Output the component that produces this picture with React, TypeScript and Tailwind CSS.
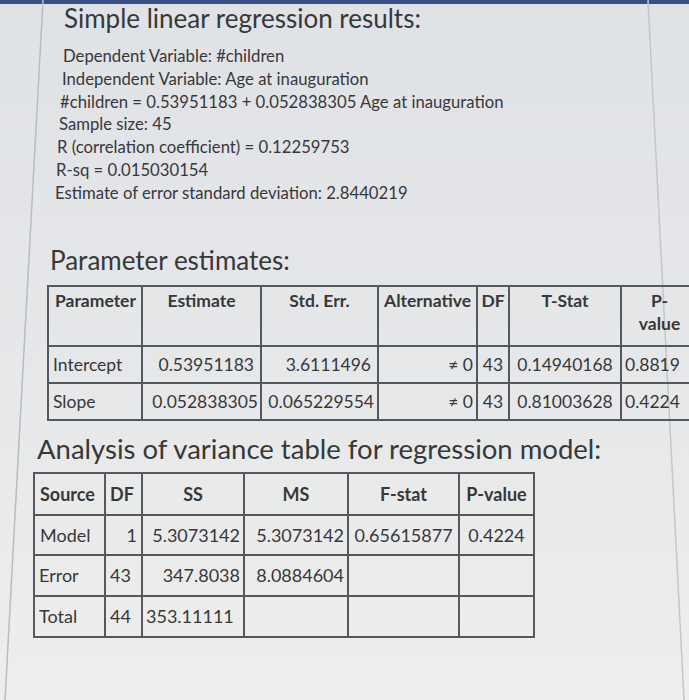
import React from 'react';

const summaryLines: { text: string; pad: string }[] = [
  { text: 'Dependent Variable: #children', pad: 'pl-[63px]' },
  { text: 'Independent Variable: Age at inauguration', pad: 'pl-[62px]' },
  { text: '#children = 0.53951183 + 0.052838305 Age at inauguration', pad: 'pl-[60px]' },
  { text: 'Sample size: 45', pad: 'pl-[59px]' },
  { text: 'R (correlation coefficient) = 0.12259753', pad: 'pl-[57px]' },
  { text: 'R-sq = 0.015030154', pad: 'pl-[56px]' },
  { text: 'Estimate of error standard deviation: 2.8440219', pad: 'pl-[55px]' },
];

const cell = 'border-2 border-[#55585c] px-[6px]';

export default function App() {
  return (
    <div className="relative w-[689px] h-[700px] overflow-hidden bg-gradient-to-b from-[#dfe2e6] via-[#e6e7e9] to-[#eeeeec] text-[#37383a] font-['Lato','Liberation_Sans',sans-serif]">
      {/* photo frame lines */}
      <svg className="absolute inset-0 pointer-events-none" width="689" height="700">
        <line x1="43" y1="0" x2="5" y2="700" stroke="#b9bcc0" strokeWidth="1.5" />
        <line x1="648" y1="0" x2="684" y2="700" stroke="#c4c6c9" strokeWidth="1.5" />
      </svg>
      <div className="h-[4px] bg-[#3b4f80]" />

      <h1 className="relative pl-[64px] mt-0 text-[26px] leading-[28px] font-normal">
        Simple linear regression results:
      </h1>

      <div className="relative mt-[13px] text-[16.7px] leading-[22.8px]">
        {summaryLines.map((l) => (
          <div key={l.text} className={l.pad}>
            {l.text}
          </div>
        ))}
      </div>

      <h2 className="relative pl-[50px] mt-[41px] text-[26px] leading-[28px] font-normal">
        Parameter estimates:
      </h2>

      <table className="relative ml-[47px] mt-[11px] w-[650px] table-fixed border-collapse text-[17.5px] leading-[23px]">
        <colgroup>
          <col className="w-[94px]" />
          <col className="w-[119px]" />
          <col className="w-[117px]" />
          <col className="w-[99px]" />
          <col className="w-[32px]" />
          <col className="w-[112px]" />
          <col className="w-[77px]" />
        </colgroup>
        <thead>
          <tr className="h-[60px] align-top font-semibold">
            <th className={`${cell} pt-[2px] text-left !px-[6px]`}>Parameter</th>
            <th className={`${cell} pt-[2px] text-center`}>Estimate</th>
            <th className={`${cell} pt-[2px] text-center`}>Std. Err.</th>
            <th className={`${cell} pt-[2px] text-center !px-[2px]`}>Alternative</th>
            <th className={`${cell} pt-[2px] text-center !px-[2px]`}>DF</th>
            <th className={`${cell} pt-[2px] text-center`}>T-Stat</th>
            <th className={`${cell} pt-[2px] text-center`}>
              P-
              <br />
              value
            </th>
          </tr>
        </thead>
        <tbody>
          <tr className="h-[37px]">
            <td className={`${cell} text-left !px-[4px]`}>Intercept</td>
            <td className={`${cell} text-right`}>0.53951183</td>
            <td className={`${cell} text-right`}>3.6111496</td>
            <td className={`${cell} text-right !px-[3px]`}>≠ 0</td>
            <td className={`${cell} text-center !px-0`}>43</td>
            <td className={`${cell} text-center !px-[1px]`}>0.14940168</td>
            <td className={`${cell} text-left !px-[3px]`}>0.8819</td>
          </tr>
          <tr className="h-[37px]">
            <td className={`${cell} text-left !px-[4px]`}>Slope</td>
            <td className={`${cell} text-right !px-[2px]`}>0.052838305</td>
            <td className={`${cell} text-right !px-[3px]`}>0.065229554</td>
            <td className={`${cell} text-right !px-[3px]`}>≠ 0</td>
            <td className={`${cell} text-center !px-0`}>43</td>
            <td className={`${cell} text-center !px-[1px]`}>0.81003628</td>
            <td className={`${cell} text-left !px-[3px]`}>0.4224</td>
          </tr>
        </tbody>
      </table>

      <h2 className="relative pl-[37px] mt-[13px] text-[27.5px] leading-[30px] font-normal">
        Analysis of variance table for regression model:
      </h2>

      <table className="relative ml-[33px] mt-[8px] w-[500px] table-fixed border-collapse text-[18px] leading-[22px]">
        <colgroup>
          <col className="w-[71px]" />
          <col className="w-[37px]" />
          <col className="w-[102px]" />
          <col className="w-[104px]" />
          <col className="w-[111px]" />
          <col className="w-[75px]" />
        </colgroup>
        <thead>
          <tr className="h-[42px] font-semibold">
            <th className={`${cell} text-left !px-[5px]`}>Source</th>
            <th className={`${cell} text-left !px-[4px]`}>DF</th>
            <th className={`${cell} text-center`}>SS</th>
            <th className={`${cell} text-center`}>MS</th>
            <th className={`${cell} text-center`}>F-stat</th>
            <th className={`${cell} text-center !px-[1px]`}>P-value</th>
          </tr>
        </thead>
        <tbody>
          <tr className="h-[40px]">
            <td className={`${cell} text-left !px-[5px]`}>Model</td>
            <td className={`${cell} text-right !px-[4px]`}>1</td>
            <td className={`${cell} text-right !px-[3px]`}>5.3073142</td>
            <td className={`${cell} text-right !px-[3px]`}>5.3073142</td>
            <td className={`${cell} text-center !px-[1px]`}>0.65615877</td>
            <td className={`${cell} text-center !px-[1px]`}>0.4224</td>
          </tr>
          <tr className="h-[41px]">
            <td className={`${cell} text-left !px-[4px]`}>Error</td>
            <td className={`${cell} text-left !px-[4px]`}>43</td>
            <td className={`${cell} text-right !px-[3px]`}>347.8038</td>
            <td className={`${cell} text-right !px-[3px]`}>8.0884604</td>
            <td className={cell}></td>
            <td className={cell}></td>
          </tr>
          <tr className="h-[41px]">
            <td className={`${cell} text-left !px-[4px]`}>Total</td>
            <td className={`${cell} text-left !px-[4px]`}>44</td>
            <td className={`${cell} text-left !px-[3px]`}>353.11111</td>
            <td className={cell}></td>
            <td className={cell}></td>
            <td className={cell}></td>
          </tr>
        </tbody>
      </table>
    </div>
  );
}
